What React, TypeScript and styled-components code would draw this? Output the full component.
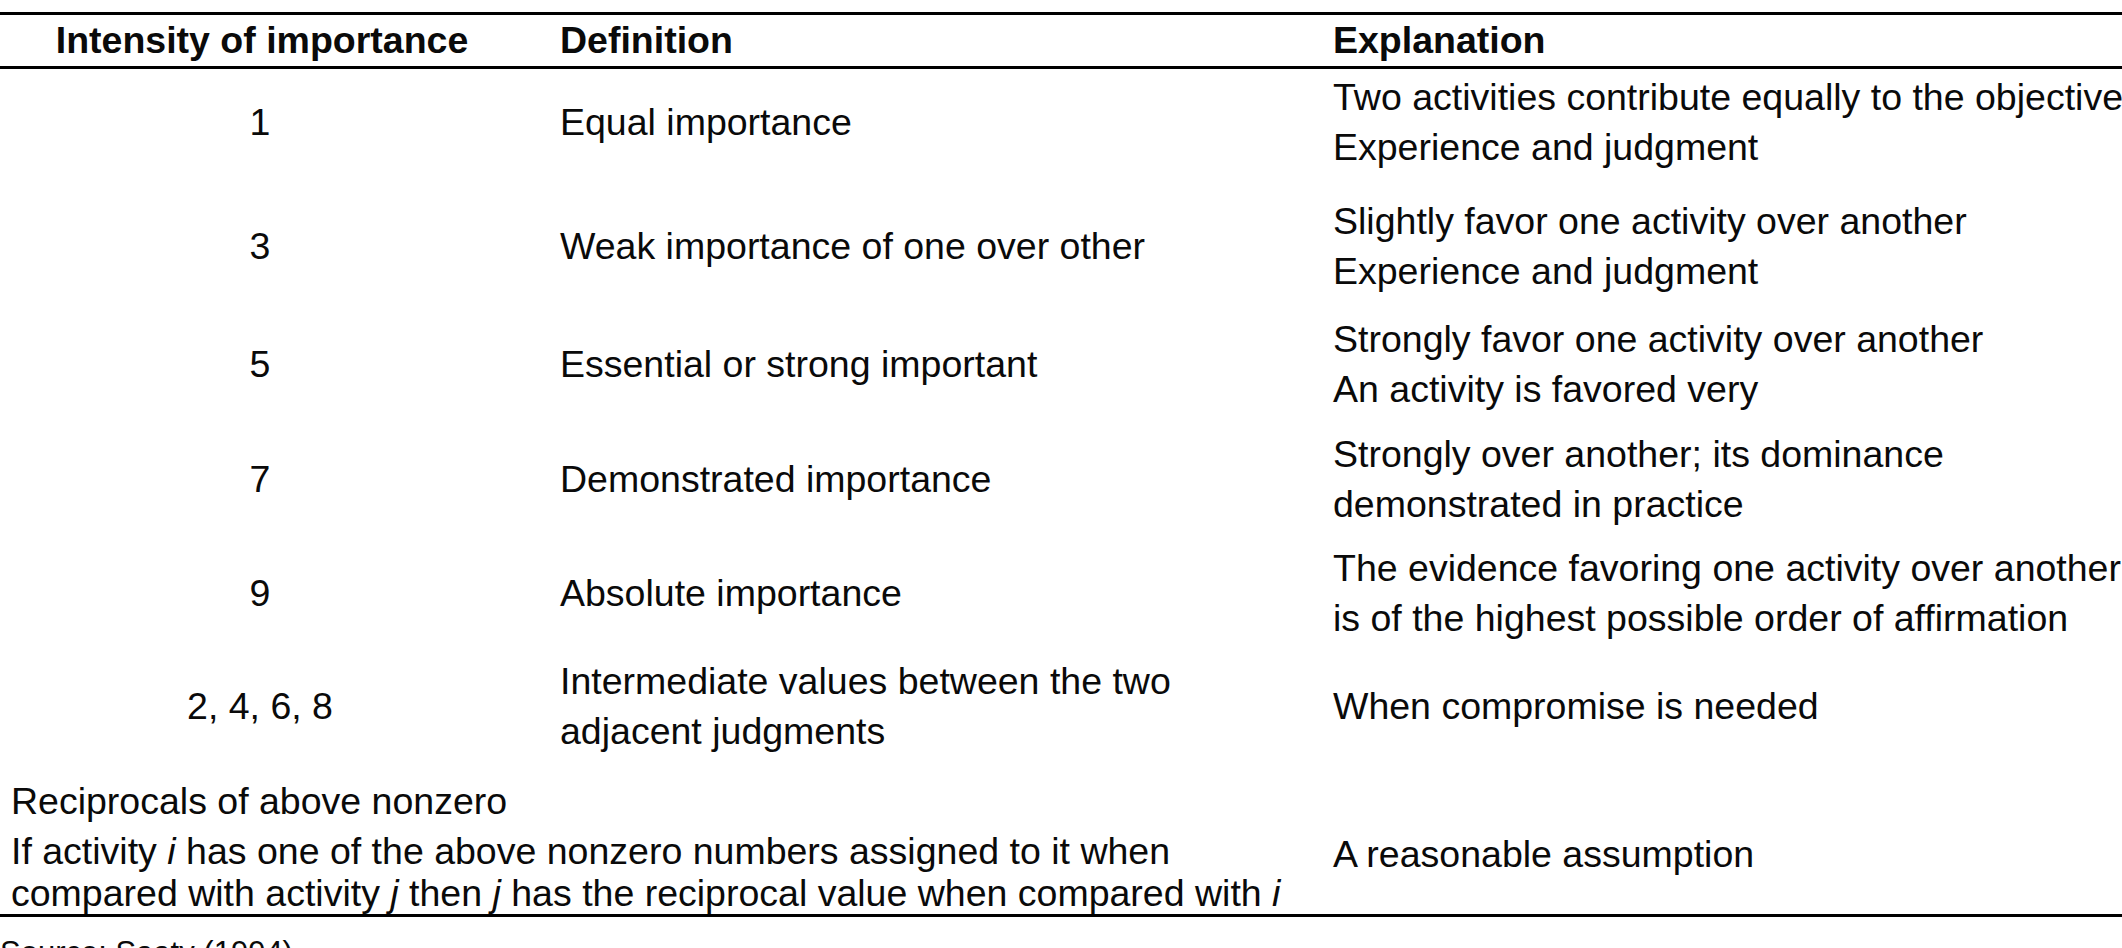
import React from 'react'
import styled, { createGlobalStyle } from 'styled-components'

type ScaleRow = {
    intensity: string
    definition: string[]
    explanation: string[]
    space: number
}

const rows: ScaleRow[] = [
    {
        intensity: '1',
        definition: ['Equal importance'],
        explanation: ['Two activities contribute equally to the objective', 'Experience and judgment'],
        space: 3,
    },
    {
        intensity: '3',
        definition: ['Weak importance of one over other'],
        explanation: ['Slightly favor one activity over another', 'Experience and judgment'],
        space: 24,
    },
    {
        intensity: '5',
        definition: ['Essential or strong important'],
        explanation: ['Strongly favor one activity over another', 'An activity is favored very'],
        space: 18,
    },
    {
        intensity: '7',
        definition: ['Demonstrated importance'],
        explanation: ['Strongly over another; its dominance', 'demonstrated in practice'],
        space: 15,
    },
    {
        intensity: '9',
        definition: ['Absolute importance'],
        explanation: ['The evidence favoring one activity over another', 'is of the highest possible order of affirmation'],
        space: 14,
    },
    {
        intensity: '2, 4, 6, 8',
        definition: ['Intermediate values between the two', 'adjacent judgments'],
        explanation: ['When compromise is needed'],
        space: 13,
    },
]

const GlobalStyle = createGlobalStyle`
    html, body {
        margin: 0;
        padding: 0;
        background: #ffffff;
        overflow: hidden;
    }
    body {
        font-family: "Liberation Sans", Arial, Helvetica, sans-serif;
        color: #0a0a0a;
    }
`

const Page = styled.div`
    width: 2122px;
    height: 948px;
    overflow: hidden;
    padding-top: 12px;
    box-sizing: border-box;
`

const Table = styled.div`
    display: flex;
    flex-direction: column;
    border-top: 3px solid #000;
    border-bottom: 3px solid #000;
`

const HeaderRow = styled.div`
    display: grid;
    grid-template-columns: 560px 773px 1fr;
    padding-top: 2px;
    padding-bottom: 3px;
    border-bottom: 3px solid #000;
    font-size: 37.5px;
    font-weight: 700;
    line-height: 46px;
    white-space: nowrap;
`

const HeaderCell = styled.div<{ $center?: boolean }>`
    text-align: ${({ $center }) => ($center ? 'center' : 'left')};
    padding-right: ${({ $center }) => ($center ? '36px' : '0')};
`

const Body = styled.div`
    display: flex;
    flex-direction: column;
`

const Row = styled.div<{ $space: number }>`
    display: grid;
    grid-template-columns: 560px 773px 1fr;
    align-items: center;
    min-height: 100px;
    margin-top: ${({ $space }) => $space}px;
    font-size: 37.5px;
    line-height: 50px;
`

const IntensityCell = styled.div`
    text-align: center;
    padding-right: 40px;
`

const TextCell = styled.div`
    display: flex;
    flex-direction: column;
    white-space: nowrap;
`

const LastRow = styled.div`
    display: grid;
    grid-template-columns: 1333px 1fr;
    align-items: center;
    margin-top: 22px;
    font-size: 37.5px;
`

const Reciprocals = styled.div`
    padding-left: 11px;
    white-space: nowrap;
`

const ReciprocalTitle = styled.div`
    line-height: 46px;
`

const ReciprocalNote = styled.div`
    margin-top: 6px;
    line-height: 42px;
`

const Assumption = styled.div`
    line-height: 46px;
    margin-top: 16px;
    white-space: nowrap;
`

const Footer = styled.div`
    margin-top: 18px;
    font-size: 31px;
    line-height: 36px;
    white-space: nowrap;
`

export default function App() {
    return (
        <>
            <GlobalStyle />
            <Page>
                <Table>
                    <HeaderRow>
                        <HeaderCell $center>Intensity of importance</HeaderCell>
                        <HeaderCell>Definition</HeaderCell>
                        <HeaderCell>Explanation</HeaderCell>
                    </HeaderRow>
                    <Body>
                        {rows.map((row) => (
                            <Row key={row.intensity} $space={row.space}>
                                <IntensityCell>{row.intensity}</IntensityCell>
                                <TextCell>
                                    {row.definition.map((line) => (
                                        <span key={line}>{line}</span>
                                    ))}
                                </TextCell>
                                <TextCell>
                                    {row.explanation.map((line) => (
                                        <span key={line}>{line}</span>
                                    ))}
                                </TextCell>
                            </Row>
                        ))}
                        <LastRow>
                            <Reciprocals>
                                <ReciprocalTitle>Reciprocals of above nonzero</ReciprocalTitle>
                                <ReciprocalNote>
                                    If activity <i>i</i> has one of the above nonzero numbers assigned to it when
                                    <br />
                                    compared with activity <i>j</i> then <i>j</i> has the reciprocal value when compared with <i>i</i>
                                </ReciprocalNote>
                            </Reciprocals>
                            <Assumption>A reasonable assumption</Assumption>
                        </LastRow>
                    </Body>
                </Table>
                <Footer>Source: Saaty (1994)</Footer>
            </Page>
        </>
    )
}
